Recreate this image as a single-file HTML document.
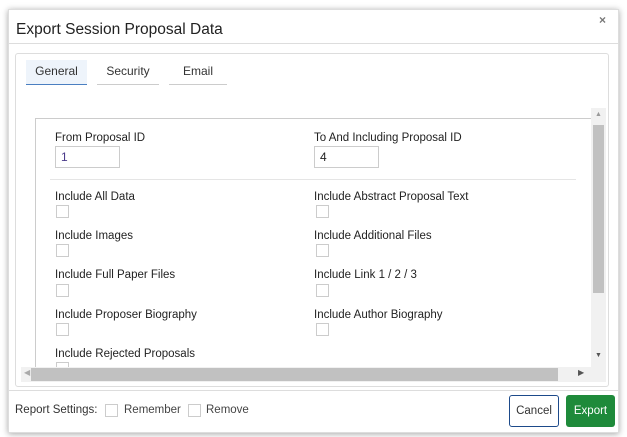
<!DOCTYPE html><html><head><style>
*{box-sizing:border-box;margin:0;padding:0}
body{width:627px;height:437px;background:#fff;font-family:"Liberation Sans",sans-serif;position:relative;overflow:hidden;color:#222}
.a{position:absolute}
.dlg{left:8px;top:9px;width:611px;height:424px;border:1px solid #ddd;box-shadow:0 1px 6px rgba(0,0,0,.35);background:#fff}
.lbl{font-size:11.5px;color:#222}
.cb{width:13px;height:13px;border:1px solid #ccc;background:#fff}
.tab{top:60px;height:25px;font-size:12px;text-align:center;line-height:23px;border-bottom:1px solid #ccc;color:#333}
</style></head><body>
<div class="a dlg"></div>
<div class="a" style="left:16px;top:21px;font-size:15.5px;color:#222">Export Session Proposal Data</div>
<div class="a" style="left:599px;top:13px;font-size:12px;color:#777;font-weight:bold">×</div>
<div class="a" style="left:9px;top:43px;width:609px;height:1px;background:#ddd"></div>
<div class="a" style="left:15px;top:53px;width:594px;height:334px;border:1px solid #ddd;border-radius:3px"></div>
<div class="a tab" style="left:26px;width:61px;background:#eef4fb;border-bottom:1px solid #4a7fc1">General</div>
<div class="a tab" style="left:97px;width:62px">Security</div>
<div class="a tab" style="left:169px;width:58px">Email</div>
<div class="a" style="left:35px;top:118px;width:557px;height:250px;border-top:1px solid #ccc;border-left:1px solid #ccc"></div>
<div class="a" style="left:591px;top:108px;width:15px;height:259px;background:#f1f1f1"></div>
<div class="a" style="left:593px;top:125px;width:11px;height:168px;background:#c1c1c1"></div>
<div class="a" style="left:595px;top:111px;font-size:7px;color:#999">▲</div>
<div class="a" style="left:595px;top:352px;font-size:7px;color:#555">▼</div>
<div class="a" style="left:21px;top:367px;width:585px;height:15px;background:#f1f1f1"></div>
<div class="a" style="left:31px;top:368px;width:527px;height:13px;background:#c1c1c1"></div>
<div class="a" style="left:24px;top:368px;font-size:8px;color:#aaa">◀</div>
<div class="a" style="left:578px;top:368px;font-size:8px;color:#555">▶</div>
<div class="a lbl" style="left:55px;top:132px">From Proposal ID</div>
<div class="a" style="left:55px;top:146px;width:65px;height:22px;border:1px solid #ccc;font-size:12px;padding:3px 5px;color:#4a3a8a">1</div>
<div class="a lbl" style="left:314px;top:132px">To And Including Proposal ID</div>
<div class="a" style="left:314px;top:146px;width:65px;height:22px;border:1px solid #ccc;font-size:12px;padding:3px 5px">4</div>
<div class="a" style="left:50px;top:179px;width:526px;height:1px;background:#e5e5e5"></div>
<div class="a lbl" style="left:55px;top:191px">Include All Data</div><div class="a cb" style="left:56px;top:205px"></div>
<div class="a lbl" style="left:314px;top:191px">Include Abstract Proposal Text</div><div class="a cb" style="left:316px;top:205px"></div>
<div class="a lbl" style="left:55px;top:230px">Include Images</div><div class="a cb" style="left:56px;top:244px"></div>
<div class="a lbl" style="left:314px;top:230px">Include Additional Files</div><div class="a cb" style="left:316px;top:244px"></div>
<div class="a lbl" style="left:55px;top:269px">Include Full Paper Files</div><div class="a cb" style="left:56px;top:284px"></div>
<div class="a lbl" style="left:314px;top:269px">Include Link 1 / 2 / 3</div><div class="a cb" style="left:316px;top:284px"></div>
<div class="a lbl" style="left:55px;top:309px">Include Proposer Biography</div><div class="a cb" style="left:56px;top:323px"></div>
<div class="a lbl" style="left:314px;top:309px">Include Author Biography</div><div class="a cb" style="left:316px;top:323px"></div>
<div class="a lbl" style="left:55px;top:348px">Include Rejected Proposals</div>
<div class="a" style="left:56px;top:362px;width:13px;height:5px;border:1px solid #ccc;border-bottom:none"></div>
<div class="a" style="left:9px;top:390px;width:609px;height:1px;background:#ddd"></div>
<div class="a lbl" style="left:15px;top:404px;color:#333">Report Settings:</div>
<div class="a cb" style="left:105px;top:404px"></div>
<div class="a lbl" style="left:124px;top:404px;color:#444">Remember</div>
<div class="a cb" style="left:188px;top:404px"></div>
<div class="a lbl" style="left:206px;top:404px;color:#444">Remove</div>
<div class="a" style="left:509px;top:395px;width:50px;height:32px;border:1px solid #1d4a8a;border-radius:3px;font-size:11.5px;text-align:center;line-height:30px;color:#333">Cancel</div>
<div class="a" style="left:566px;top:395px;width:49px;height:32px;background:#1e8a3a;border-radius:3px;font-size:11.5px;text-align:center;line-height:32px;color:#fff">Export</div>
</body></html>
